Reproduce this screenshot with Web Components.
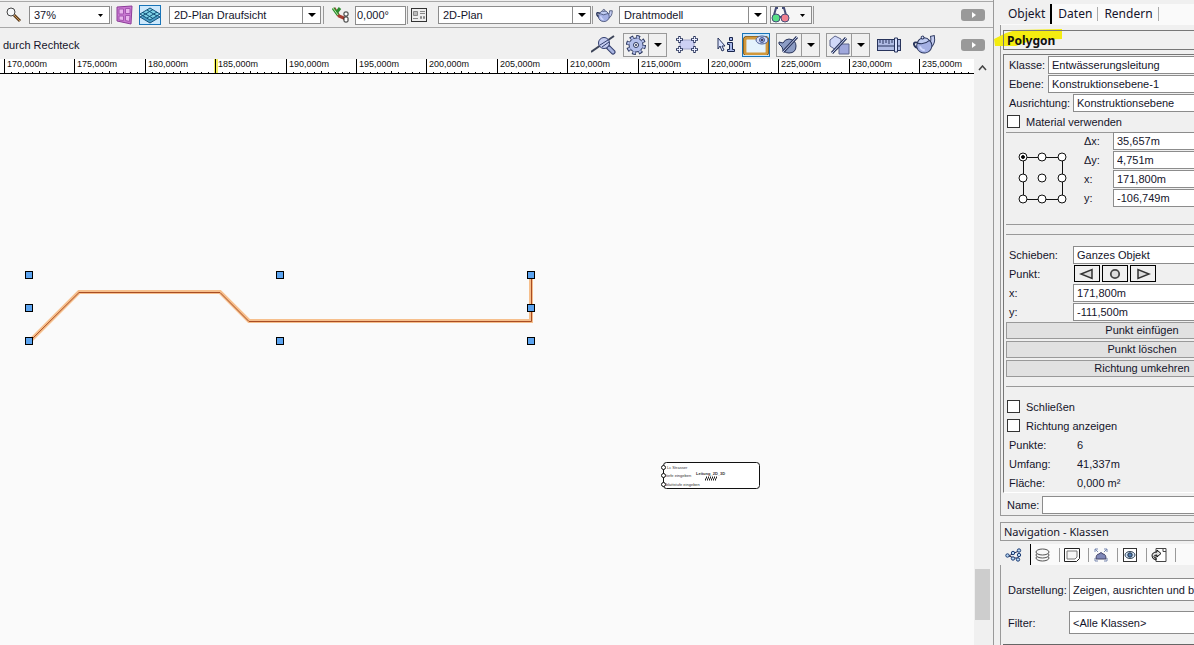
<!DOCTYPE html>
<html lang="de">
<head>
<meta charset="utf-8">
<title>2D-Plan</title>
<style>
html, body { margin: 0; height: 100%; }
body { font: 11px/14px "Liberation Sans", Arial, sans-serif; color: #14142a; background: #f0f0f0; overflow: hidden; }
</style>
</head>
<body>
<cad-app></cad-app>
<script>
const define = (name, html) => customElements.define(name, class extends HTMLElement {
  connectedCallback() {
    if (this.shadowRoot) return;
    const t = document.createElement('template');
    t.innerHTML = typeof html === 'function' ? html(this) : html;
    this.attachShadow({ mode: 'open' }).append(t.content.cloneNode(true));
  }
});

const pot = '<path d="M6 7C-1 3 0 11 6 13" fill="none" stroke="#28345c" stroke-width="2"/><path d="M17 9q3 0 3-6h4q0 9-7 12z" fill="#c4ccf0" stroke="#28345c"/><ellipse cx="11.500" cy="11.500" rx="8" ry="7.500" fill="#a4b0e4" stroke="#28345c"/><path d="M5 7q6 4 13 0-2-4-6.500-4T5 7z" fill="#c0ccf2" stroke="#28345c"/><circle cx="11.500" cy="2.500" r="1.500" fill="#dce4ff" stroke="#28345c"/><path d="M7 11q0 4 4 5" stroke="#d4dcff" stroke-width="2" fill="none"/>';
const icons = {
  lens: [16, 16, '<path d="M8 8l6 6" stroke="#5c3c1c" stroke-width="3"/><path d="M8 8l6 6" stroke="#c89858"/><circle cx="5" cy="5" r="4" fill="#f6f8fa" stroke="#444"/>'],
  grid: [18, 20, '<path d="M1 2l15-1-1 18-14-3z" fill="#c878d0" stroke="#8c3c98"/><path d="M3 4h4.500v5H3zM9.500 3.500H14v5H9.500zM3 11h4.500v4.500L3 15zM9.500 10.500H14l-.5 6-4-1z" fill="#e8b4ec" stroke="#a454b0"/>'],
  layers: [20, 20, '<path d="M0 12l10-6 10 6-10 6z" fill="#4c9cc4" stroke="#145078"/><path d="M0 9l10-6 10 6-10 6z" fill="#7cd0e4" stroke="#145078"/><path d="M3 7.500l10 6M7 5l10 6M3 10.500l10-6M7 13l10-6" stroke="#145078" stroke-width="1"/>'],
  angle: [18, 16, '<path d="M2 1l5 8 7 3" fill="none" stroke="#a83c30" stroke-width="3"/><path d="M1 1l5 7M8 1L5 5" stroke="#2c8c30" stroke-width="3" fill="none"/><path d="M1 1l5 7" stroke="#b8e8a0"/><rect x="12" y="5" width="4" height="4" rx="1" fill="#fff" stroke="#222"/><rect x="12" y="10" width="4" height="5" rx="1" fill="#fff" stroke="#222"/>'],
  sheet: [16, 14, '<rect x=".5" y=".5" width="15" height="13" fill="#eee" stroke="#333"/><path d="M2.500 3.500h4v4h-4zM9 3.500h5M9 5.500h5M9.500 8.500h1v2h-1zM12.500 8.500h1v2h-1zM2 10.500h5" fill="#bbb" stroke="#888"/>'],
  pot: [17, 15, pot, '0 0 25 20'],
  potBig: [25, 21, '<g transform="rotate(-12 12 10) translate(1 1) scale(.95)">' + pot + '</g>', '0 0 25 21'],
  glasses: [19, 16, '<path d="M3 8L5 1h2M15 8L13 1h-2M8 10h3" fill="none" stroke="#444c78" stroke-width="2"/><circle cx="5" cy="11" r="4" fill="#58e088" stroke="#444c78"/><circle cx="14" cy="11" r="4" fill="#f08090" stroke="#444c78"/>'],
  snap: [25, 20, '<path d="M0 17L23 1" stroke="#3c4458" stroke-width="2"/><path d="M17 12l5 5" stroke="#303c6c" stroke-width="5" stroke-linecap="round"/><path d="M18 13l4 4" stroke="#a8b4e0" stroke-width="3" stroke-linecap="round"/><circle cx="13" cy="8" r="5.500" fill="#c4ccf0" stroke="#303c6c"/><path d="M9 10l8-5M11 12l7-5" stroke="#303c6c"/>'],
  gear: [20, 20, '<circle cx="10" cy="10" r="8" fill="none" stroke="#28345c" stroke-width="4" stroke-dasharray="3.600 2.680"/><circle cx="10" cy="10" r="7" fill="#b4c0ec" stroke="#28345c"/><circle cx="10" cy="10" r="7.700" fill="none" stroke="#b4c0ec" stroke-width="2.500" stroke-dasharray="2.200 3.850" stroke-dashoffset="-.6"/><circle cx="10" cy="10" r="2.500" fill="#fff" stroke="#28345c"/><circle cx="10" cy="10" r="1" fill="#28345c"/>'],
  area: [22, 17, '<path d="M4 4h14v9H4z" fill="#ccd0f4" stroke="#a0a4c8"/><path d="M3.500 0v7M0 3.500h7M18.500 0v7M15 3.500h7M3.500 10v7M0 13.500h7M18.500 10v7M15 13.500h7" stroke="#28345c" stroke-width="2.400"/><path d="M3.500 1v5M1 3.500h5M18.500 1v5M16 3.500h5M3.500 11v5M1 13.500h5M18.500 11v5M16 13.500h5" stroke="#e8ecff"/>'],
  info: [18, 17, '<path d="M1 2v11l2-3 2 5 2-1-2-4h3z" fill="#dce4ff" stroke="#28345c"/><path d="M10.500 6.500h5v7h2v2h-7v-2h2v-5h-2zM12.500 1.500h3v3h-3z" fill="#a8b8e8" stroke="#18244c"/>'],
  frame: [26, 20, '<rect x="2" y="3" width="22" height="16" rx="2" fill="none" stroke="#604010" stroke-width="4"/><rect x="2" y="3" width="22" height="16" rx="2" fill="#e4f2fc" stroke="#d0983c" stroke-width="2.800"/><ellipse cx="19" cy="5" rx="6" ry="4" fill="#d4dcf8" stroke="#485c94"/><circle cx="19" cy="5" r="2.500" fill="#98a4dc" stroke="#485c94"/><circle cx="19" cy="5" r="1" fill="#223"/>'],
  potCut: [22, 20, '<path d="M1 7l4 1q2-4 6-4 7 1 7 7 0 7-7 7-6 0-7-6L1 9z" fill="#8c9cc4" stroke="#28345c"/><path d="M5 17L19 2" stroke="#28345c" stroke-width="3"/><path d="M5 17L19 2" stroke="#ccd4f4"/>'],
  shapes: [21, 20, '<path d="M1 5l5-4 6 3v7l-5 4-6-4z" fill="#d0d8f8" stroke="#5c648c"/><path d="M10 9h10v10H10z" fill="#a0a8dc" stroke="#5c648c"/><path d="M3 18L17 3" stroke="#28345c" stroke-width="3"/><path d="M3 18L17 3" stroke="#d8e0ff"/>'],
  scale: [25, 16, '<rect x=".5" y="2.500" width="23" height="11" fill="#b0bce4" stroke="#28345c"/><path d="M1 9h22M3 3v3M6 3v4M9 3v3M12 3v4M15 3v3" stroke="#28345c"/><path d="M17.500 1h3v14h-3z" fill="#dce4ff" stroke="#28345c"/>'],
  more: [24, 12, '<rect width="24" height="12" rx="3" fill="#999"/><path d="M11 3l4 3-4 3z" fill="#fff"/>'],
  classes: [17, 14, '<path d="M4 8l5-3 5-2M4 8l5 2 5 0" stroke="#224" fill="none"/><g fill="#b8d8f4" stroke="#1c3c74"><circle cx="2.500" cy="7.500" r="1.700"/><circle cx="8" cy="5" r="1.700"/><circle cx="8" cy="10.500" r="1.700"/><circle cx="14" cy="2.500" r="1.700"/><circle cx="14" cy="7" r="1.700"/><circle cx="13" cy="11.500" r="1.700"/></g>'],
  stack: [16, 14, '<g fill="#f8f8f8" stroke="#555"><ellipse cx="7.500" cy="10" rx="6.500" ry="3"/><ellipse cx="7.500" cy="7" rx="6.500" ry="3"/><ellipse cx="7.500" cy="4" rx="6.500" ry="3"/></g>'],
  page: [16, 14, '<path d="M.5.5h15v10l-3 3H.5z" fill="#fff" stroke="#222"/><path d="M3 3h10v6l-2 2H3z" fill="#f6f6f6" stroke="#777"/>'],
  view: [14, 14, '<path d="M2 11q0-5 3-5 2-3 4 0 3 0 3 5z" fill="#8088b8" stroke="#446"/><path d="M1 4V1h3M10 1h3v3M1 10v3h3M13 10v3h-3M4 4L1 1M10 4l3-3" fill="none" stroke="#7888b0"/>'],
  eye: [14, 14, '<rect x=".5" y=".5" width="13" height="13" fill="#fff" stroke="#333"/><ellipse cx="7" cy="7" rx="5" ry="3.500" fill="#cfe0f4" stroke="#345"/><circle cx="7" cy="7" r="2.200" fill="#4c78b0" stroke="#234"/>'],
  link: [16, 14, '<path d="M5 .5h10v13H5z" fill="#fff" stroke="#444"/><path d="M12 .5v3h3" fill="none" stroke="#444"/><path d="M5 12Q1 11 1 8q0-4 5-4V2l4 3.500L6 9V7Q3 7 3 8.500 3 10 5 10z" fill="#ddd" stroke="#111"/>'],
  prev: [16, 12, '<path d="M13 1.500v9L2 6z" fill="#ddd" stroke="#333" stroke-width="1.500"/>'],
  dot: [16, 12, '<circle cx="8" cy="6" r="4.200" fill="#ddd" stroke="#444" stroke-width="1.800"/>'],
  next: [16, 12, '<path d="M3 1.500v9L14 6z" fill="#ddd" stroke="#333" stroke-width="1.500"/>'],
  drop: [8, 4, '<path d="M0 0h8L4 4z" fill="#000"/>'],
  dropSmall: [5, 3, '<path d="M0 0h5L2.500 3z" fill="#000"/>'],
  up: [9, 6, '<path d="M1 5l3.500-4L8 5" fill="none" stroke="#444" stroke-width="1.500"/>']
};
define('ui-icon', el => {
  const [w, h, body, box] = icons[el.getAttribute('name')];
  return `<style>:host{display:block;flex:none;line-height:0}svg{display:block}</style>
  <svg width="${w}" height="${h}" viewBox="${box || `0 0 ${w} ${h}`}" aria-hidden="true">${body}</svg>`;
});

/* Drop-down with its own arrow segment */
define('ui-combo', el => `<style>
  :host{display:flex;position:relative;box-sizing:border-box;height:18px;background:#fff;border:1px solid #8c8c8c}
  select{appearance:none;flex:1;width:100%;min-width:0;border:0;margin:0;padding:0 4px;background:none;color:inherit;font:inherit;outline:0}
  span{display:flex;flex:none;width:17px;align-items:center;justify-content:center;pointer-events:none;border-left:1px solid #8c8c8c}
  :host([plain]) span{border:0}
  ::slotted(ui-icon){align-self:center}
  :host([icon-only]) select{position:absolute;inset:0;opacity:0}
  :host([icon-only]){justify-content:space-between;background:#f6f6f6}
</style><slot></slot><select aria-label="${el.getAttribute('label')}"><option>${el.getAttribute('value') || ''}</option></select>
<span><ui-icon name="${el.hasAttribute('plain') ? 'dropSmall' : 'drop'}"></ui-icon></span>`);

define('tool-button', el => `<style>
  :host{display:flex}
  button{display:flex;box-sizing:border-box;align-items:center;justify-content:center;height:24px;padding:0 1px;border:0;background:none;font:inherit}
  :host([active]) button{background:#cce8fc;border:1px solid #1874b8;padding:0}
  :host([split]) button{border:1px solid #999;padding:0;width:26px}
  :host([split]) .d{width:19px;margin-left:-1px}
  :host([small]) button{height:20px;padding:0}
</style><button aria-label="${el.getAttribute('label')}"><ui-icon name="${el.getAttribute('icon')}"></ui-icon></button>${el.hasAttribute('split') ? '<button class="d" aria-label="Optionen"><ui-icon name="drop"></ui-icon></button>' : ''}`);

define('view-bar', `<style>
  :host{display:flex;align-items:center;box-sizing:border-box;height:28px;padding:2px 8px 0 6px;border-top:1px solid #f0f0f0;border-bottom:1px solid #a8a8a8;box-shadow:inset 0 1px #a8a8a8}
  i{width:1px;height:18px;background:#999;flex:none}
  input{box-sizing:border-box;width:51px;height:19px;margin:0 1px 0 5px;padding:0 1px;border:1px solid #8c8c8c;font:inherit;color:inherit;background:#fff}
  .zoom{width:81px;margin:0 1px 0 7px}.proj{width:152px;margin:0 2px 0 8px}.layer{width:153px;margin:0 1px 0 11px}.render{width:148px;margin:0 3px 0 6px}.glass{width:42px;margin-right:1px}
  .grid{margin:0 5px 0 4px}.angle{margin-left:8px}.sheet{margin-left:3px}.pot{margin-left:3px}.more{margin-left:auto}
</style>
<tool-button small icon="lens" label="Zoom"></tool-button>
<ui-combo class="zoom" plain value="37%" label="Zoomfaktor"></ui-combo><i></i>
<tool-button small class="grid" icon="grid" label="Raster"></tool-button>
<tool-button small active icon="layers" label="Ebenen"></tool-button>
<ui-combo class="proj" value="2D-Plan Draufsicht" label="Ansicht"></ui-combo><i></i>
<tool-button small class="angle" icon="angle" label="Drehen"></tool-button>
<input value="0,000°" aria-label="Drehwinkel"><i></i>
<tool-button small class="sheet" icon="sheet" label="Blatt"></tool-button>
<ui-combo class="layer" value="2D-Plan" label="Projektion"></ui-combo><i></i>
<tool-button small class="pot" icon="pot" label="Rendern"></tool-button>
<ui-combo class="render" value="Drahtmodell" label="Darstellungsart"></ui-combo>
<ui-combo class="glass" plain icon-only label="3D-Brille"><ui-icon name="glasses"></ui-icon></ui-combo><i></i>
<tool-button small class="more" icon="more" label="Mehr"></tool-button>`);

define('mode-bar', `<style>
  :host{display:flex;align-items:center;box-sizing:border-box;height:31px;padding:2px 7px 0 3px}
  span{flex:1}
  div{display:flex;align-items:center;gap:6px}
  .area{margin-left:2px}.info{margin-left:11px}.pot{margin-left:2px}.more{margin-left:16px}
</style><span>durch Rechteck</span><div>
<tool-button icon="snap" label="Ausrichten"></tool-button>
<tool-button split icon="gear" label="Einstellungen"></tool-button>
<tool-button class="area" icon="area" label="Bereich"></tool-button>
<tool-button class="info" icon="info" label="Info"></tool-button>
<tool-button active icon="frame" label="Rahmen"></tool-button>
<tool-button split icon="potCut" label="Schnitt"></tool-button>
<tool-button split icon="shapes" label="Formen"></tool-button>
<tool-button icon="scale" label="Maßstab"></tool-button>
<tool-button class="pot" icon="potBig" label="Rendern"></tool-button>
<tool-button class="more" icon="more" label="Mehr"></tool-button></div>`);

define('plan-ruler', () => {
  const step = 70.4;
  let s = '';
  for (let n = 0; n < 14; n++) {
    const x = Math.round(4 + n * step);
    s += `<path d="M${x + .5} 0v15" stroke="#000"/><text x="${x + 3}" y="8">${170 + n * 5},000m</text>`;
    for (let k = 1; k < 10; k++) s += `<path d="M${Math.round(x + k * step / 10) + .5} ${k === 5 ? 12 : 13}v2" stroke="#000"/>`;
  }
  return `<style>:host{display:block;height:15px;background:#fff}svg{display:block;width:100%;height:15px}text{font:9px "Liberation Sans",Arial,sans-serif;fill:#111}</style>
  <svg><path d="M214 0h4v15h-4z" fill="#f4f060"/>${s}<path d="M0 14.500h2000" stroke="#000"/></svg>`;
});

define('plan-canvas', () => {
  let h = '';
  for (const y of [201, 234, 267]) for (const x of [29, 280, 531])
    if (x !== 280 || y !== 234) h += `<rect x="${x - 3.5}" y="${y - 3.5}" width="7" height="7"/>`;
  return `<style>:host{display:block;min-height:0;background:#fafafa}svg{display:block;width:100%;height:100%}.h{fill:#5ca4f0;stroke:#000}text{font-size:4px;fill:#333}</style>
  <svg><g fill="none"><path d="M30 267L79 218H220L249 247H531V201" stroke="#f6bf8c" stroke-width="4"/><path d="M30 267L79 218.500H220L249 247.500H531.500V201" stroke="#a84c24"/></g>
  <g class="h">${h}</g>
  <rect x="663.500" y="388.500" width="96" height="26" rx="3" fill="#fff" stroke="#111"/>
  <g fill="#fff" stroke="#111"><circle cx="663.500" cy="393.500" r="2"/><circle cx="663.500" cy="401.500" r="2"/><circle cx="663.500" cy="410.500" r="2"/></g>
  <text x="667" y="395">Lc Strasser</text><text x="666" y="403">tiefe eingeben</text><text x="666" y="412">blattstufe eingeben</text>
  <text x="696" y="401" font-weight="bold">Leitung_2D_3D</text>
  <path d="M706 403.500h12M705 405.500h12" stroke="#222" stroke-width="2" stroke-dasharray="1 1"/></svg>`;
});

define('scroll-strip', `<style>:host{display:flex;flex-direction:column;align-items:center;background:#f0f0f0;padding:6px 0 25px;box-sizing:border-box}
  .thumb{width:15px;height:51px;background:#cdcdcd;margin-top:auto}</style><ui-icon name="up"></ui-icon><div class="thumb"></div>`);

/* Labelled control of the properties palette */
define('prop-row', el => {
  const a = n => el.getAttribute(n), v = a('value').replace('<', '&lt;');
  return `<style>
  :host{display:flex;align-items:center;height:19px}
  label{flex:none;width:var(--label,64px);white-space:nowrap}
  select,input,output{appearance:none;box-sizing:border-box;flex:1;min-width:0;height:var(--field,18px);margin:0;padding:0 3px;border:1px solid #8c8c8c;border-radius:0;background:#fff;font:inherit;color:inherit}
  output{border:0;background:none;padding:2px 4px;}
  </style><label for="f">${a('label')}</label>${a('kind') === 'select' ? `<select id="f"><option>${v}</option></select>` : a('kind') === 'text' ? `<output id="f">${v}</output>` : `<input id="f" value="${v}">`}`;
});

define('check-row', `<style>:host{display:block;height:19px}label{display:flex;align-items:center;height:19px;gap:6px;margin-left:-2px}
  input{appearance:none;box-sizing:border-box;width:13px;height:13px;margin:0;border:1px solid #333;background:#fff}</style>
  <label><input type="checkbox"><slot></slot></label>`);

define('anchor-grid', () => {
  let s = '';
  for (const y of [5, 26, 47]) for (const x of [5, 24, 44]) s += `<circle cx="${x}" cy="${y}" r="4"/>`;
  return `<style>:host{display:block}svg{display:block}</style><svg width="50" height="52" fill="#fff" stroke="#111"><path d="M5.500 5.500h39v42h-39z" fill="none"/>${s}<circle cx="5" cy="5" r="1.500" fill="#000"/></svg>`;
});

define('title-mark', `<style>:host{display:block;position:relative}
  svg{position:absolute;left:-9px;top:-2px;pointer-events:none}
  h2{position:relative;margin:0;box-sizing:border-box;height:20px;padding-left:3px;border:1px solid #777;font:bold 12px/19px "Noto Sans",Tahoma,sans-serif;color:#111;}</style>
  <svg width="70" height="22"><path d="M0 11L12 5 22 2l46-1v10l-30 1-5 2-11 4H1z" fill="#f4ec10"/></svg><h2><slot></slot></h2>`);

define('object-palette', `<style>
  :host{display:block;box-sizing:border-box;padding:4px 0 0}
  nav{display:flex;height:21px;background:#fafafa;font:12px/20px "Noto Sans",Tahoma,sans-serif}
  nav button{flex:none;box-sizing:border-box;height:20px;margin:0;padding:0 6px;border:0;background:none;font:inherit;color:inherit}
  nav button:first-child{padding:0 5px 0 8px;border-right:2px solid #000;background:#f0f0f0}
  nav button+button{padding:0 5px 0 6px;border-right:1px solid #aaa;height:14px;line-height:14px;margin-top:3px}
  .outer{border:1px solid #999;border-top:0;padding:5px 0 1px 2px}
  .box{border-left:1px solid #777;border-top:1px solid #777;border-bottom:1px solid #fff;margin-top:4px;padding:0 0 0 5px}
  .k{--label:39px}
  hr{border:0;border-top:1px solid #999;margin:0 0 0 -3px}
  .first{margin-top:1px}
  .second,.third{margin-top:9px;margin-bottom:10px}
  .dim{display:grid;grid-template-columns:66px 1fr;padding-left:9px;margin-top:-2px;margin-bottom:17px}
  .dim anchor-grid{margin-top:21px}
  .rows{--label:29px}
  .steps{display:flex;align-items:center;height:19px}
  .steps span{width:65px}
  .steps button{display:flex;align-items:center;justify-content:center;box-sizing:border-box;width:26px;height:17px;padding:0;border:1px solid #000;background:#f0f0f0;margin:0 2px 0 0}
  .wide{display:block;box-sizing:border-box;width:calc(100% + 3px);height:17px;margin:1px 0 2px -3px;padding:0;border:1px solid #999;background:#e1e1e1;font:inherit;line-height:15px;color:inherit}
  .name{--label:35px;margin-left:4px;margin-top:2px}
</style>
<nav><button>Objekt</button><button>Daten</button><button>Rendern</button></nav>
<div class="outer">
 <title-mark>Polygon</title-mark>
 <div class="box">
  <prop-row class="k" kind="select" label="Klasse:" value="Entwässerungsleitung"></prop-row>
  <prop-row class="k" kind="select" label="Ebene:" value="Konstruktionsebene-1"></prop-row>
  <prop-row kind="select" label="Ausrichtung:" value="Konstruktionsebene"></prop-row>
  <check-row>Material verwenden</check-row>
  <hr class="first">
  <div class="dim"><anchor-grid></anchor-grid><div class="rows">
   <prop-row label="Δx:" value="35,657m"></prop-row><prop-row label="Δy:" value="4,751m"></prop-row>
   <prop-row label="x:" value="171,800m"></prop-row><prop-row label="y:" value="-106,749m"></prop-row></div></div>
  <hr><hr class="second">
  <prop-row kind="select" label="Schieben:" value="Ganzes Objekt"></prop-row>
  <div class="steps"><span>Punkt:</span><button aria-label="Zurück"><ui-icon name="prev"></ui-icon></button><button aria-label="Punkt"><ui-icon name="dot"></ui-icon></button><button aria-label="Weiter"><ui-icon name="next"></ui-icon></button></div>
  <prop-row label="x:" value="171,800m"></prop-row><prop-row label="y:" value="-111,500m"></prop-row>
  <button class="wide">Punkt einfügen</button><button class="wide">Punkt löschen</button><button class="wide">Richtung umkehren</button>
  <hr class="third">
  <check-row>Schließen</check-row><check-row>Richtung anzeigen</check-row>
  <prop-row kind="text" label="Punkte:" value="6"></prop-row>
  <prop-row kind="text" label="Umfang:" value="41,337m"></prop-row>
  <prop-row kind="text" label="Fläche:" value="0,000 m²"></prop-row>
 </div>
 <prop-row class="name" label="Name:" value=""></prop-row>
</div>`);

define('nav-palette', `<style>
  :host{display:block;margin-top:6px}
  h2{box-sizing:border-box;height:19px;margin:0;padding-left:3px;border:1px solid #999;font:11px/18px "Noto Sans",Tahoma,sans-serif}
  nav{display:flex;align-items:center;height:21px;margin-top:3px;background:#fafafa}
  nav button{display:flex;align-items:center;justify-content:center;box-sizing:border-box;flex:none;width:29px;height:14px;padding:0 4px 0 0;border:0;border-right:1px solid #999;background:none}
  nav button:first-child{width:31px;height:21px;border-right:1px solid #000;background:#f0f0f0}
  .body{border-left:1px solid #999;padding:13px 0 0 7px}
  prop-row{--label:61px;--field:23px;height:23px;margin-bottom:10px}
  hr{border:0;border-top:1px solid #666;margin:0 0 0 -5px}
</style><h2>Navigation - Klassen</h2>
<nav><button aria-label="Klassen"><ui-icon name="classes"></ui-icon></button><button aria-label="Ebenen"><ui-icon name="stack"></ui-icon></button><button aria-label="Layouts"><ui-icon name="page"></ui-icon></button><button aria-label="Ansichten"><ui-icon name="view"></ui-icon></button><button aria-label="Sichtbarkeit"><ui-icon name="eye"></ui-icon></button><button aria-label="Referenzen"><ui-icon name="link"></ui-icon></button></nav>
<div class="body"><prop-row kind="select" label="Darstellung:" value="Zeigen, ausrichten und bearbeiten"></prop-row><prop-row kind="select" label="Filter:" value="<Alle Klassen>"></prop-row><hr></div>`);

define('cad-app', `<style>
  :host{display:grid;grid-template-columns:minmax(0,1fr) 200px;height:100vh}
  main{display:flex;flex-direction:column;min-width:0;border-right:1px solid #999}
  .work{flex:1;min-height:0;display:grid;grid-template:15px minmax(0,1fr)/minmax(0,1fr) 16px;padding-right:3px}
  scroll-strip{grid-column:2;grid-row:1/3}
  plan-ruler,plan-canvas{grid-column:1}
  aside{overflow:hidden;padding-left:6px}
  .in{width:279px}
</style><main><view-bar></view-bar><mode-bar></mode-bar><div class="work"><plan-ruler></plan-ruler><scroll-strip></scroll-strip><plan-canvas></plan-canvas></div></main>
<aside><div class="in"><object-palette></object-palette><nav-palette></nav-palette></div></aside>`);
</script>
</body>
</html>
